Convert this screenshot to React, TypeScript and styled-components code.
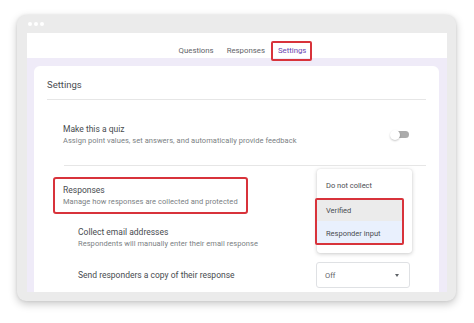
import React from 'react';
import styled, { createGlobalStyle } from 'styled-components';

const GlobalStyle = createGlobalStyle`
  html, body {
    margin: 0;
    padding: 0;
    background: #ffffff;
  }
  body {
    font-family: Roboto, "Liberation Sans", Arial, sans-serif;
    -webkit-font-smoothing: antialiased;
  }
  * {
    box-sizing: border-box;
  }
`;

const Page = styled.div`
  width: 474px;
  height: 323px;
  padding: 15px 0 0 17px;
`;

const Frame = styled.div`
  width: 439px;
  height: 286px;
  display: flex;
  flex-direction: column;
  padding: 0 9px 9px 10px;
  background: #ebebeb;
  border-radius: 9px;
  box-shadow: 0 3px 8px rgba(0, 0, 0, 0.22), 0 0 3px rgba(0, 0, 0, 0.08);
`;

const TitleBar = styled.div`
  height: 18px;
  display: flex;
  align-items: center;
  gap: 2px;
  padding-left: 1px;
`;

const Dot = styled.span`
  width: 4px;
  height: 4px;
  border-radius: 50%;
  background: #ffffff;
`;

const Header = styled.div`
  height: 25px;
  flex-shrink: 0;
  display: flex;
  justify-content: center;
  align-items: flex-start;
  padding: 8px 0 0 10px;
  background: #ffffff;
`;

const Tab = styled.div<{ $active?: boolean }>`
  position: relative;
  height: 20px;
  padding: 0 4px 0 5px;
  border: 2px solid ${props => props.$active ? '#d8333b' : 'transparent'};
  border-radius: 2px;
  font-size: 7.8px;
  line-height: 15px;
  color: ${props => props.$active ? '#6a45b0' : '#5f6368'};
`;

const Content = styled.div`
  flex: 1;
  display: flex;
  flex-direction: column;
  padding: 8px 8px 0 7px;
  background: #efebf8;
`;

const Card = styled.div`
  flex: 1;
  padding: 12px 13px 0;
  background: #ffffff;
  border-radius: 6px 6px 0 0;
`;

const CardTitle = styled.div`
  font-size: 9.5px;
  line-height: 14px;
  color: #4a4d51;
`;

const Divider = styled.div<{ $inset?: number }>`
  height: 1px;
  margin-left: ${props => props.$inset || 0}px;
  background: #e6e6e6;
`;

const TitleDivider = styled(Divider)`
  margin-top: 7px;
`;

const QuizRow = styled.div`
  display: flex;
  align-items: center;
  justify-content: space-between;
  padding: 23px 16px 19px 16px;
`;

const TextBlock = styled.div`
  display: flex;
  flex-direction: column;
`;

const RowTitle = styled.div`
  font-size: 8.5px;
  line-height: 12px;
  color: #484b4f;
  white-space: nowrap;
`;

const RowDesc = styled.div`
  font-size: 7.5px;
  line-height: 11px;
  letter-spacing: 0.05px;
  color: #7b7f84;
  white-space: nowrap;
`;

const Toggle = styled.div`
  position: relative;
  width: 20px;
  height: 10px;
`;

const Track = styled.div`
  position: absolute;
  left: 3px;
  top: 1.5px;
  width: 16px;
  height: 7px;
  border-radius: 4px;
  background: #ababab;
`;

const Thumb = styled.div`
  position: absolute;
  left: 0;
  top: 0;
  width: 10px;
  height: 10px;
  border-radius: 50%;
  background: #ffffff;
  box-shadow: 0 1px 2px rgba(0, 0, 0, 0.22);
`;

const ResponsesSection = styled.div`
  position: relative;
  padding-top: 11px;
`;

const Highlight = styled.div`
  width: fit-content;
  margin-left: 6px;
  padding: 5px 8px 5px;
  border: 2px solid #d8333b;
  border-radius: 3px;
`;

const SubRow = styled.div`
  display: flex;
  align-items: center;
  justify-content: space-between;
  padding: 0 16px 0 31px;
`;

const CollectRow = styled(SubRow)`
  margin-top: 12px;
`;

const SendRow = styled(SubRow)`
  margin-top: 13px;
`;

const Select = styled.div`
  width: 94px;
  height: 26px;
  display: flex;
  align-items: center;
  justify-content: space-between;
  padding: 0 10px 0 8px;
  border: 1px solid #dfe1e4;
  border-radius: 3px;
  font-size: 7.5px;
  color: #5f6368;
`;

const Caret = styled.span`
  width: 0;
  height: 0;
  border-left: 2.5px solid transparent;
  border-right: 2.5px solid transparent;
  border-top: 3px solid #5f6368;
`;

const Menu = styled.div`
  position: absolute;
  top: 3px;
  right: 14px;
  width: 95px;
  padding: 4px 0 8px;
  background: #ffffff;
  border-radius: 3px;
  box-shadow: 0 1px 4px rgba(0, 0, 0, 0.2), 0 0 1px rgba(0, 0, 0, 0.15);
`;

const MenuItem = styled.div<{ $bg?: string; $h: number; $pt?: number }>`
  height: ${props => props.$h}px;
  padding: ${props => props.$pt || 0}px 0 0 9px;
  line-height: ${props => props.$pt ? 18 : props.$h}px;
  font-size: 7.5px;
  color: #4a4d51;
  background: ${props => props.$bg || 'transparent'};
  white-space: nowrap;
`;

const MenuHighlight = styled.div`
  margin: 0 8px 0 -2px;
  border: 2px solid #d8333b;
  border-radius: 2px;
`;

export default function App() {
  return (
    <>
      <GlobalStyle />
      <Page>
        <Frame>
          <TitleBar>
            <Dot />
            <Dot />
            <Dot />
          </TitleBar>
          <Header>
            <Tab>Questions</Tab>
            <Tab>Responses</Tab>
            <Tab $active>Settings</Tab>
          </Header>
          <Content>
            <Card>
              <CardTitle>Settings</CardTitle>
              <TitleDivider />
              <QuizRow>
                <TextBlock>
                  <RowTitle>Make this a quiz</RowTitle>
                  <RowDesc>Assign point values, set answers, and automatically provide feedback</RowDesc>
                </TextBlock>
                <Toggle>
                  <Track />
                  <Thumb />
                </Toggle>
              </QuizRow>
              <Divider $inset={17} />
              <ResponsesSection>
                <Highlight>
                  <RowTitle>Responses</RowTitle>
                  <RowDesc>Manage how responses are collected and protected</RowDesc>
                </Highlight>
                <CollectRow>
                  <TextBlock>
                    <RowTitle>Collect email addresses</RowTitle>
                    <RowDesc>Respondents will manually enter their email response</RowDesc>
                  </TextBlock>
                </CollectRow>
                <SendRow>
                  <RowTitle>Send responders a copy of their response</RowTitle>
                  <Select>
                    <span>Off</span>
                    <Caret />
                  </Select>
                </SendRow>
                <Menu>
                  <MenuItem $h={25}>Do not collect</MenuItem>
                  <MenuHighlight>
                    <MenuItem $h={21} $bg="#ebebeb">Verified</MenuItem>
                    <MenuItem $h={22} $pt={4} $bg="#e9f0fd">Responder input</MenuItem>
                  </MenuHighlight>
                </Menu>
              </ResponsesSection>
            </Card>
          </Content>
        </Frame>
      </Page>
    </>
  );
}
